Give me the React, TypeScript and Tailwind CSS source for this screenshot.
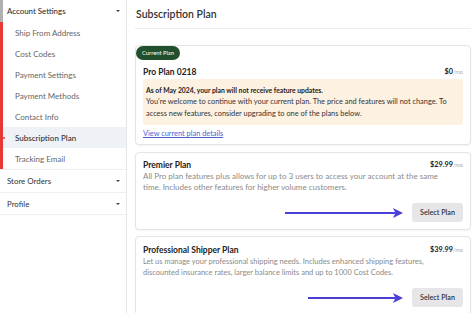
import { ReactNode } from 'react';

const subItems = [
  'Ship From Address',
  'Cost Codes',
  'Payment Settings',
  'Payment Methods',
  'Contact Info',
  'Subscription Plan',
  'Tracking Email',
];

const Caret = () => (
  <span className="inline-block w-0 h-0 border-l-[2px] border-r-[2px] border-t-[2.5px] border-l-transparent border-r-transparent border-t-[#444]" />
);

const Arrow = ({ width }: { width: number }) => (
  <svg width={width} height="12" viewBox={`0 0 ${width} 12`} className="shrink-0">
    <line x1="0" y1="6" x2={width - 8} y2="6" stroke="#4a40d8" strokeWidth="2" strokeLinecap="round" />
    <path d={`M${width - 10} 1 L${width} 6 L${width - 10} 11 L${width - 7.5} 6 Z`} fill="#4a40d8" />
  </svg>
);

const Price = ({ amount }: { amount: string }) => (
  <span className="text-[7.3px] font-bold leading-[11px] text-[#222]">
    {amount}
    <span className="text-[5.5px] font-normal text-[#aaa]">/mo</span>
  </span>
);

const PlanCard = ({
  title,
  price,
  arrow,
  descClass,
  children,
  className,
}: {
  title: string;
  price: string;
  arrow: number;
  descClass: string;
  children: ReactNode;
  className?: string;
}) => (
  <div className={`rounded-[4px] border border-[#e4e4e4] bg-white px-[7px] pb-[7px] shadow-[0_1px_2px_rgba(0,0,0,0.05)] ${className ?? ''}`}>
    <div className="flex items-start justify-between">
      <span className="mt-[1px] text-[8.5px] font-bold leading-[11px] text-[#222]">{title}</span>
      <Price amount={price} />
    </div>
    <p className={`leading-[11px] text-[#8a8a8a] ${descClass}`}>{children}</p>
    <div className="mt-[10px] flex items-center justify-end gap-[9px]">
      <Arrow width={arrow} />
      <button className="h-[19px] w-[51px] rounded-[3px] bg-[#e6e6e8] text-[7.2px] font-semibold leading-[19px] text-[#333]">
        Select Plan
      </button>
    </div>
  </div>
);

export default function App() {
  return (
    <div
      className="flex h-[313px] w-[474px] overflow-hidden bg-white leading-[12px]"
      style={{ fontFamily: 'Lato, "Noto Sans", sans-serif' }}
    >
      {/* sidebar */}
      <aside className="w-[127px] shrink-0 border-r border-[#e6e6e6]">
        <div className="flex h-[22px] items-center justify-between border-l-[3px] border-[#b0b0b0] pl-[4px] pr-[6px]">
          <span className="text-[7.9px] font-medium text-[#333]">Account Settings</span>
          <Caret />
        </div>
        <div className="border-l-[3px] border-[#e53935]">
          {subItems.map((item) => (
            <div
              key={item}
              className={`relative flex h-[21px] items-center pl-[12px] text-[8px] ${
                item === 'Subscription Plan' ? 'bg-[#eef1f6] font-medium text-[#333]' : 'text-[#666]'
              }`}
            >
              {item === 'Subscription Plan' && (
                <span className="absolute left-0 top-[9.5px] h-[2px] w-[2px] rounded-full bg-[#e53935]" />
              )}
              {item}
            </div>
          ))}
        </div>
        <div className="flex h-[23px] items-center justify-between border-t border-[#efefef] pl-[7px] pr-[6px]">
          <span className="text-[7.9px] text-[#333]">Store Orders</span>
          <Caret />
        </div>
        <div className="flex h-[23px] items-center justify-between border-y border-[#efefef] pl-[7px] pr-[6px]">
          <span className="text-[7.9px] text-[#333]">Profile</span>
          <Caret />
        </div>
      </aside>

      {/* main */}
      <main className="flex-1 pl-[8px] pr-[3px]">
        <div className="flex h-[29px] items-center border-b border-[#ececec] pl-[1px]">
          <h1 className="text-[10.5px] font-semibold text-[#333]">Subscription Plan</h1>
        </div>

        <div className="mt-[16px] overflow-hidden rounded-[4px] border border-[#e4e4e4] bg-white pb-[4px] shadow-[0_1px_2px_rgba(0,0,0,0.05)]">
          <span className="flex h-[14px] w-[44px] items-center justify-center rounded-full bg-[#23502c] text-[5.8px] text-white">
            Current Plan
          </span>
          <div className="px-[7px]">
            <div className="mt-[6px] flex items-center justify-between">
              <span className="text-[8.5px] font-bold leading-[12px] text-[#222]">Pro Plan 0218</span>
              <Price amount="$0" />
            </div>
            <div className="mt-[1px] rounded-[2px] bg-[#fdf1e2] px-[3px] py-[5px] text-[7.4px] leading-[12px] text-[#333]">
              <p className="text-[6.8px] font-bold text-[#222]">
                As of May 2024, your plan will not receive feature updates.
              </p>
              <p>
                You’re welcome to continue with your current plan. The price and features will not change. To
                access new features, consider upgrading to one of the plans below.
              </p>
            </div>
            <a className="mt-[3px] block text-[7.4px] leading-[12px] text-[#4c64d4] underline">
              View current plan details
            </a>
          </div>
        </div>

        <PlanCard
          title="Premier Plan"
          price="$29.99"
          arrow={118}
          descClass="max-w-[300px] text-[8px]"
          className="mt-[7px] pt-[6px]"
        >
          All Pro plan features plus allows for up to 3 users to access your account at the same time. Includes
          other features for higher volume customers.
        </PlanCard>

        <PlanCard
          title="Professional Shipper Plan"
          price="$39.99"
          arrow={95}
          descClass="max-w-[300px] text-[7.5px]"
          className="mt-[6px] pt-[7px]"
        >
          Let us manage your professional shipping needs. Includes enhanced shipping features, discounted insurance
          rates, larger balance limits and up to 1000 Cost Codes.
        </PlanCard>
      </main>
    </div>
  );
}
